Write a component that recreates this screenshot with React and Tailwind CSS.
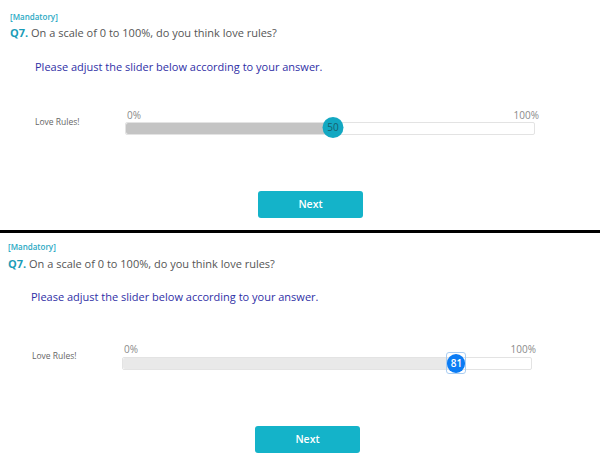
import React from 'react';

const font = { fontFamily: '"Open Sans", "Noto Sans", sans-serif' };

const Slider = ({ value, focused }) => {
  // fill and thumb follow the answer value
  const pos = `calc(${value}% + 3px)`;
  return (
    <div className="relative h-[13px] w-[410px] rounded-[2px] border border-[#e3e3e3] bg-white">
      <div
        className={`absolute left-0 top-0 h-full rounded-l-[2px] ${focused ? 'bg-[#e9e9e9]' : 'bg-[#c4c4c4]'}`}
        style={{ width: pos }}
      />
      {focused ? (
        <div
          className="absolute top-[-6px] flex h-[22px] w-[20px] -translate-x-1/2 items-center justify-center rounded-[3px] border border-[#a9cdf2]"
          style={{ left: pos }}
        >
          <div className="flex h-[19px] w-[19px] items-center justify-center rounded-full bg-[#0b7cf4] text-[10px] font-semibold text-white">
            {value}
          </div>
        </div>
      ) : (
        <div
          className="absolute top-[-6px] flex h-[21px] w-[21px] -translate-x-1/2 items-center justify-center rounded-full bg-[#13a8c2] text-[10px] text-[#175e6c]"
          style={{ left: pos }}
        >
          {value}
        </div>
      )}
    </div>
  );
};

const Question = ({ value, focused }) => (
  <>
    <div className={`text-[8px] font-semibold leading-[12px] text-[#2aa9c4] ${focused ? 'ml-[8px]' : 'ml-[10px]'}`}>
      [Mandatory]
    </div>
    <div className={`text-[11px] leading-[18px] text-[#555555] ${focused ? 'ml-[8px] mt-[2px]' : 'ml-[10px] mt-[1px]'}`}>
      <span className="font-bold text-[#1a9cb7]">Q7.</span> On a scale of 0 to 100%, do you think love rules?
    </div>
    <div className={`text-[11px] leading-[18px] text-[#2f2fa6] ${focused ? 'ml-[31px] mt-[15px]' : 'ml-[35px] mt-[16px]'}`}>
      Please adjust the slider below according to your answer.
    </div>
    <div className={`flex ${focused ? 'ml-[32px] mt-[37px]' : 'ml-[35px] mt-[33px]'}`}>
      <div className="w-[90px] pt-[7px] text-[8.5px] leading-[12px] text-[#666666]">Love Rules!</div>
      <div className="flex flex-col">
        <div className="-mr-[4px] flex justify-between pl-[2px] text-[10px] leading-[12px] text-[#8a8a8a]">
          <span>0%</span>
          <span>100%</span>
        </div>
        <div className={focused ? 'mt-[2px]' : 'mt-[1px]'}>
          <Slider value={value} focused={focused} />
        </div>
      </div>
    </div>
    <div className={`mt-[56px] flex h-[27px] w-[105px] items-center justify-center rounded-[3px] bg-[#14b3c9] text-[10.5px] font-semibold text-white ${focused ? 'ml-[255px]' : 'ml-[258px]'}`}>
      Next
    </div>
  </>
);

export default function App() {
  return (
    <div className="flex h-[476px] w-[600px] flex-col overflow-hidden bg-white" style={font}>
      <div className="h-[230px] pt-[11px]">
        <Question value={50} />
      </div>
      <div className="h-[3px] w-full bg-black" />
      <div className="flex-1 pt-[8px]">
        <Question value={81} focused />
      </div>
    </div>
  );
}
